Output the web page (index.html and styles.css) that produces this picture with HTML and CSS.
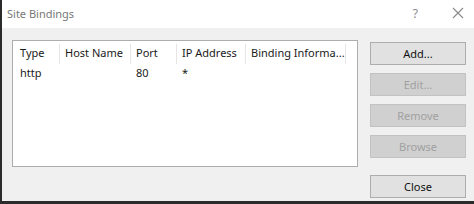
FILE: index.html
```html
<!DOCTYPE html>
<html lang="en">
<head>
    <meta charset="UTF-8">
    <title>Site Bindings</title>
    <link rel="stylesheet" href="styles.css">
</head>
<body>
    <div class="window">
        <div class="titlebar">
            <span class="title">Site Bindings</span>
            <span class="help">?</span>
            <svg class="close-x" width="12" height="12" viewBox="0 0 12 12">
                <path d="M1 1 L11 11 M11 1 L1 11" stroke="#8a8a8a" stroke-width="1.1" fill="none"/>
            </svg>
        </div>
        <div class="content">
            <div class="list">
                <div class="row header">
                    <div class="cell c-type">Type</div>
                    <div class="cell c-host">Host Name</div>
                    <div class="cell c-port">Port</div>
                    <div class="cell c-ip">IP Address</div>
                    <div class="cell c-info">Binding Informa...</div>
                </div>
                <div class="row">
                    <div class="cell c-type">http</div>
                    <div class="cell c-host"></div>
                    <div class="cell c-port">80</div>
                    <div class="cell c-ip">*</div>
                    <div class="cell c-info"></div>
                </div>
            </div>
            <div class="buttons">
                <button class="btn">Add...</button>
                <button class="btn" disabled>Edit...</button>
                <button class="btn" disabled>Remove</button>
                <button class="btn" disabled>Browse</button>
                <button class="btn btn-close">Close</button>
            </div>
        </div>
    </div>
</body>
</html>
```

FILE: styles.css
```css
* {
    margin: 0;
    padding: 0;
    box-sizing: border-box;
}

body {
    font-family: 'Noto Sans', 'Liberation Sans', sans-serif;
    font-size: 11px;
    background: #2b2b2b;
    width: 474px;
    height: 204px;
    overflow: hidden;
}

.window {
    margin-left: 2px;
    width: 472px;
    height: 201px;
    background: #f0f0f0;
    display: flex;
    flex-direction: column;
}

.titlebar {
    height: 28px;
    flex-shrink: 0;
    background: #fff;
    display: flex;
    align-items: center;
    padding: 0 0 2px 5px;
    color: #777;
}

.title {
    flex: 1;
    font-size: 11px;
}

.help {
    font-size: 12px;
    color: #8a8a8a;
    margin-right: 34px;
}

.close-x {
    margin-right: 10px;
}

.content {
    display: flex;
    align-items: flex-start;
    padding: 12px 0 0 10px;
}

.list {
    width: 346px;
    height: 127px;
    background: #fff;
    border: 1px solid #adadad;
    padding-top: 3px;
}

.row {
    display: flex;
    height: 20px;
    align-items: center;
    color: #1a1a1a;
}

.cell {
    padding-left: 5px;
    white-space: nowrap;
    height: 100%;
    line-height: 18px;
}

.cell.c-type {
    padding-left: 7px;
}

.header .cell {
    border-right: 1px solid #e5e5e5;
}

.c-type { width: 47px; }
.c-host { width: 71px; }
.c-port { width: 46px; }
.c-ip { width: 69px; }
.c-info { width: 100px; }

.buttons {
    margin-left: 12px;
    margin-top: 2px;
    width: 96px;
    display: flex;
    flex-direction: column;
}

.btn {
    height: 23px;
    margin-bottom: 8px;
    font-family: inherit;
    font-size: 11px;
    background: #e1e1e1;
    border: 1px solid #adadad;
    color: #111;
}

.btn:disabled {
    background: #d0d0d0;
    border-color: #c2c2c2;
    color: #a0a0a0;
}

.btn-close {
    margin-top: 9px;
    margin-bottom: 0;
}
```
